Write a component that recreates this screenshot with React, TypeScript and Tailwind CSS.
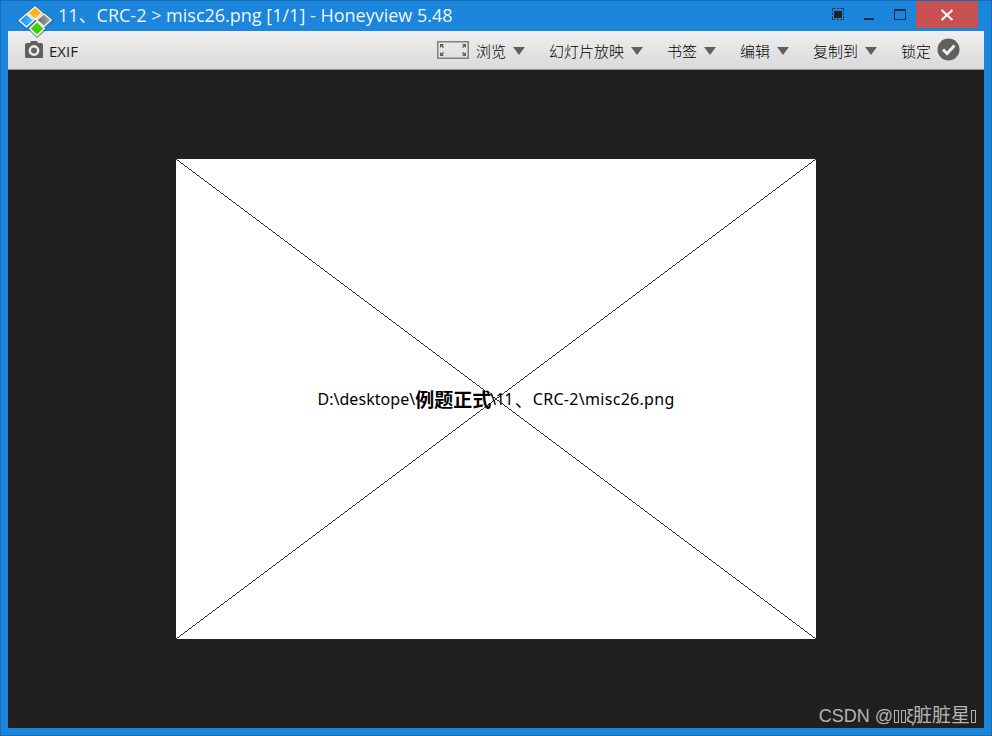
import type { ReactNode } from "react";

const menus = ["浏览", "幻灯片放映", "书签", "编辑", "复制到"];

export default function App() {
    return (
        <div className="flex h-[736px] w-[992px] flex-col overflow-hidden border border-[#176bb0] bg-[#1b86db] px-[7px] pb-[7px] font-['Noto_Sans','Noto_Sans_CJK_SC',sans-serif]">
            <TitleBar />
            <Toolbar />
            <Viewer />
        </div>
    );
}

function TitleBar() {
    return (
        <header className="relative flex h-[30px] shrink-0 items-start">
            <Logo />
            <h1 className="ml-[50px] mt-[2px] whitespace-nowrap font-['Open_Sans','Noto_Sans_CJK_SC',sans-serif] text-[18px] font-normal leading-[25px] text-white/95">
                11、CRC-2 &gt; misc26.png [1/1] - Honeyview 5.48
            </h1>
            <div className="ml-auto mr-[6px] flex">
                <WindowButton>
                    <path d="M9.500 10.500v-3h3M17.500 7.500h3v3M20.500 15.500v3h-3M12.500 18.500h-3v-3" fill="none" stroke="#173a58" />
                    <path d="M14 7.500h2M14 18.500h2M9.500 12v2M20.500 12v2" stroke="#173a58" />
                    <path d="M11 10h8v7h-8z" fill="#222" />
                </WindowButton>
                <WindowButton>
                    <path d="M10 17h10v2H10z" fill="#17304a" />
                </WindowButton>
                <WindowButton>
                    <path d="M9.500 8.500h11v10h-11zM9 9.500h12" fill="none" stroke="#17304a" />
                </WindowButton>
                <button className="flex h-[27px] w-[62px] items-center justify-center bg-[#c75050]">
                    <svg width="14" height="14" viewBox="0 0 14 14" fill="none" stroke="#fff" strokeWidth="2">
                        <path d="M1.500 2l11 10M12.500 2l-11 10" />
                    </svg>
                </button>
            </div>
        </header>
    );
}

function WindowButton({ children }: { children: ReactNode }) {
    return (
        <button className="h-[27px] w-[31px]">
            <svg width="31" height="27" viewBox="0 0 31 27">
                {children}
            </svg>
        </button>
    );
}

function Logo() {
    return (
        <svg className="absolute left-[9px] top-[3px] z-10" width="38" height="36" viewBox="0 0 38 36">
            <defs>
                <linearGradient id="orange" x1="0" y1="0" x2="0" y2="1">
                    <stop stopColor="#ff9d05" />
                    <stop offset="1" stopColor="#ffc43c" />
                </linearGradient>
                <linearGradient id="blue" x1="0" y1="0" x2="1" y2="0">
                    <stop stopColor="#0b8ff8" />
                    <stop offset="1" stopColor="#45c5ff" />
                </linearGradient>
                <linearGradient id="gray" x1="0" y1="0" x2="1" y2="0">
                    <stop stopColor="#666" />
                    <stop offset="1" stopColor="#aaa" />
                </linearGradient>
            </defs>
            <g stroke="#34627d" strokeWidth="3.500" strokeLinejoin="round" opacity=".55">
                <path d="M18 3l7.500 6.500L18 16l-7.500-6.500zM9.500 10L17 17l-7.500 6.500L2 17zM27 10l7.500 6.500-7.500 6.500-7.500-6.500zM20 18l7.500 7.500L20 32l-7.500-7.500z" />
            </g>
            <g stroke="#f4f4ef" strokeWidth="1.500" strokeLinejoin="round">
                <path d="M18 3l7.300 6.300-7.300 6.300-7.300-6.300z" fill="url(#orange)" />
                <path d="M9.500 10l7.300 6.500-7.300 6.500-7.300-6.500z" fill="url(#blue)" />
                <path d="M27 10l7.300 6-7.300 6.500-7.300-6.500z" fill="url(#gray)" />
                <path d="M20 17.500l7.300 7-7.300 7-7.300-7z" fill="#42cf08" />
            </g>
        </svg>
    );
}

function Toolbar() {
    return (
        <nav className="flex h-[39px] shrink-0 items-center border-b border-[#929292] bg-linear-to-b from-[#efefef] to-[#dadada] pl-4 pr-6 text-[15px] leading-5 text-[#1c1c1c]">
            <div className="flex items-center">
                <svg width="20" height="20" viewBox="0 0 20 20" fill="#606060">
                    <path d="M3 3h3l1-2h6l1 2h3q2 0 2 2v12q0 1-1 1H2q-1 0-1-1V5q0-2 2-2z" />
                    <circle cx="10" cy="10.500" r="4.200" fill="#666" stroke="#eee" strokeWidth="2.400" />
                </svg>
                <span className="ml-[5px] mt-[2px] font-['Open_Sans',sans-serif] text-[15px]">EXIF</span>
            </div>
            <div className="ml-auto flex items-center gap-6">
                {menus.map((label, index) => (
                    <div key={label} className="flex items-center gap-[7px]">
                        {index === 0 && <FitIcon />}
                        <span className="mt-[2px] whitespace-nowrap font-['Noto_Sans_CJK_SC',sans-serif] font-light text-black">{label}</span>
                        <svg className="mt-px" width="12" height="8" viewBox="0 0 12 8">
                            <path d="M0 0h12L6 8z" fill="#606060" />
                        </svg>
                    </div>
                ))}
                <div className="flex items-center gap-[6px]">
                    <span className="mt-[2px] whitespace-nowrap font-['Noto_Sans_CJK_SC',sans-serif] font-light text-black">锁定</span>
                    <svg className="-mt-px" width="23" height="23" viewBox="0 0 23 23" fill="none">
                        <circle cx="11.500" cy="11.500" r="11" fill="#606060" />
                        <path d="M6 11.500l4 4 7.500-8" stroke="#eee" strokeWidth="3" />
                    </svg>
                </div>
            </div>
        </nav>
    );
}

function FitIcon() {
    return (
        <svg width="33" height="18" viewBox="0 0 33 18" fill="none" stroke="#808080">
            <path d="M1.750.750h30.500v16.500H1.750z" strokeWidth="1.500" />
            <path d="M4 3h4L4 7zM30 3h-4l4 4zM4 15h4l-4-4zM30 15h-4l4-4z" fill="#606060" stroke="none" />
            <path d="M5 4l2.500 2.500M29 4l-2.500 2.500M5 14l2.500-2.500M29 14l-2.500-2.500" stroke="#606060" strokeWidth="1.500" />
        </svg>
    );
}

function Viewer() {
    return (
        <main className="relative flex flex-1 items-start justify-center bg-[#202020] pt-[89px]">
            <div className="relative flex h-[480px] w-[640px] items-center justify-center bg-white">
                <svg className="absolute inset-0" width="640" height="480" shapeRendering="crispEdges" stroke="#000" strokeWidth="0.800">
                    <path d="M0 0l640 480M640 0L0 480" />
                </svg>
                <p className="relative flex whitespace-nowrap text-[16px] leading-6 text-black">
                    <span className="tracking-[0.05px]">D:\desktope\</span>
                    <span className="font-['Noto_Sans_CJK_SC',sans-serif] text-[19px] font-bold">例题正式</span>
                    <span className="-ml-px tracking-[-0.6px]">\11</span>
                    <span className="ml-[2px] w-[18px] font-['Noto_Sans_CJK_SC',sans-serif] text-[18px]">、</span>
                    <span className="tracking-[0.300px]">CRC-2\misc26.png</span>
                </p>
            </div>
            <Watermark />
        </main>
    );
}

function Watermark() {
    return (
        <div className="absolute bottom-0 right-[7px] flex h-6 items-center whitespace-nowrap font-['Liberation_Sans','Noto_Sans_CJK_SC',sans-serif] text-[18px] leading-6 text-[#b5b5b5]">
            <span>CSDN @</span>
            <MissingGlyph />
            <MissingGlyph />
            <span className="-ml-px">ξ</span>
            <span className="-ml-px text-[19px]">脏脏星</span>
            <MissingGlyph />
        </div>
    );
}

function MissingGlyph() {
    return <span className="mx-px h-[13px] w-[5px] border border-[#b5b5b5]" />;
}
